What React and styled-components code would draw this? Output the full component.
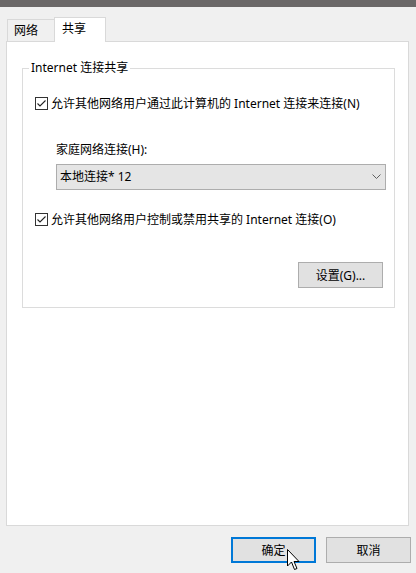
import styled, { createGlobalStyle } from "styled-components";

const GlobalStyle = createGlobalStyle`
  html, body {
    margin: 0;
    padding: 0;
    background: #f0f0f0;
  }
  * {
    box-sizing: border-box;
  }
`;

const Window = styled.div`
  position: relative;
  width: 416px;
  height: 573px;
  display: flex;
  flex-direction: column;
  background: #f0f0f0;
  overflow: hidden;
  font-family: "Noto Sans", "Noto Sans CJK SC", sans-serif;
  font-size: 12px;
  color: #000;
`;

const TopStrip = styled.div`
  height: 7px;
  background: #6b6868;
`;

const Body = styled.div`
  display: flex;
  flex-direction: column;
  padding: 10px 7px 0 6px;
`;

const TabList = styled.div`
  display: flex;
  align-items: flex-end;
  height: 25px;
  margin-bottom: -1px;
  padding-left: 1px;
`;

const Tab = styled.div`
  display: flex;
  align-items: center;
  height: ${(p) => (p.$active ? "25px" : "23px")};
  width: ${(p) => (p.$active ? "52px" : "48px")};
  padding: ${(p) => (p.$active ? "0 0 2px 7px" : "0 0 1px 6px")};
  margin-left: ${(p) => (p.$active ? "-1px" : "0")};
  border: 1px solid #d9d9d9;
  border-bottom: none;
  background: ${(p) => (p.$active ? "#fff" : "#f0f0f0")};
  position: ${(p) => (p.$active ? "relative" : "static")};
  z-index: ${(p) => (p.$active ? 1 : "auto")};
  line-height: 16px;
`;

const Panel = styled.div`
  height: 485px;
  border: 1px solid #d9d9d9;
  background: #fff;
  padding: 0 13px 0 15px;
`;

const Group = styled.fieldset`
  margin: 18px 0 0 0;
  padding: 0 0 0 6px;
  height: 248px;
  min-width: 0;
  border: 1px solid #dcdcdc;
`;

const Legend = styled.legend`
  padding: 0 2px;
  line-height: 16px;
`;

const GroupBody = styled.div`
  display: flex;
  flex-direction: column;
  padding: 0 8px 0 6px;
`;

const CheckRow = styled.label`
  display: flex;
  align-items: center;
  gap: 3px;
  height: 13px;
  margin-top: ${(p) => p.$top}px;
  line-height: 13px;
  white-space: nowrap;
`;

const FieldLabel = styled.div`
  margin: 32px 0 0 21px;
  line-height: 16px;
`;

const Select = styled.div`
  display: flex;
  align-items: center;
  justify-content: space-between;
  height: 26px;
  margin: 6px 0 0 21px;
  padding: 0 4px 0 3px;
  background: #e5e5e5;
  border: 1px solid #adadad;
  line-height: 16px;
`;

const ButtonRow = styled.div`
  display: flex;
  justify-content: flex-end;
  margin: 36px 3px 0 0;
`;

const Button = styled.button`
  width: 85px;
  height: 26px;
  padding: 0;
  font: inherit;
  color: #000;
  background: #e1e1e1;
  border: ${(p) => (p.$focused ? "2px solid #0078d7" : "1px solid #adadad")};
`;

const Footer = styled.div`
  display: flex;
  justify-content: flex-end;
  gap: 10px;
  margin-top: 11px;
  padding-right: 5px;
`;

const Pointer = styled.svg`
  position: absolute;
  left: 287px;
  top: 549px;
`;

function CheckBox() {
  return (
    <svg width="13" height="13" viewBox="0 0 13 13">
      <rect x="0.5" y="0.5" width="12" height="12" fill="#fff" stroke="#333" />
      <polyline points="2.5,6.5 5,9 10.5,3.5" fill="none" stroke="#222" strokeWidth="1.1" />
    </svg>
  );
}

function Chevron() {
  return (
    <svg width="9" height="6" viewBox="0 0 9 6">
      <polyline points="0.5,0.5 4.5,4.5 8.5,0.5" fill="none" stroke="#606060" strokeWidth="1" />
    </svg>
  );
}

export default function App() {
  return (
    <>
      <GlobalStyle />
      <Window>
        <TopStrip />
        <Body>
          <TabList>
            <Tab>网络</Tab>
            <Tab $active>共享</Tab>
          </TabList>
          <Panel>
            <Group>
              <Legend>Internet 连接共享</Legend>
              <GroupBody>
                <CheckRow $top={21}>
                  <CheckBox />
                  允许其他网络用户通过此计算机的 Internet 连接来连接(N)
                </CheckRow>
                <FieldLabel>家庭网络连接(H):</FieldLabel>
                <Select>
                  本地连接* 12
                  <Chevron />
                </Select>
                <CheckRow $top={23}>
                  <CheckBox />
                  允许其他网络用户控制或禁用共享的 Internet 连接(O)
                </CheckRow>
                <ButtonRow>
                  <Button>设置(G)...</Button>
                </ButtonRow>
              </GroupBody>
            </Group>
          </Panel>
        </Body>
        <Footer>
          <Button $focused>确定</Button>
          <Button>取消</Button>
        </Footer>
        <Pointer width="13" height="22" viewBox="0 0 13 22">
          <path
            d="M0.5 0.5 L0.5 17 L4.5 13 L7.5 20.5 L10 19.5 L7 12.5 L12 12.5 Z"
            fill="#fff"
            stroke="#000"
            strokeWidth="1"
            strokeLinejoin="miter"
          />
        </Pointer>
      </Window>
    </>
  );
}
